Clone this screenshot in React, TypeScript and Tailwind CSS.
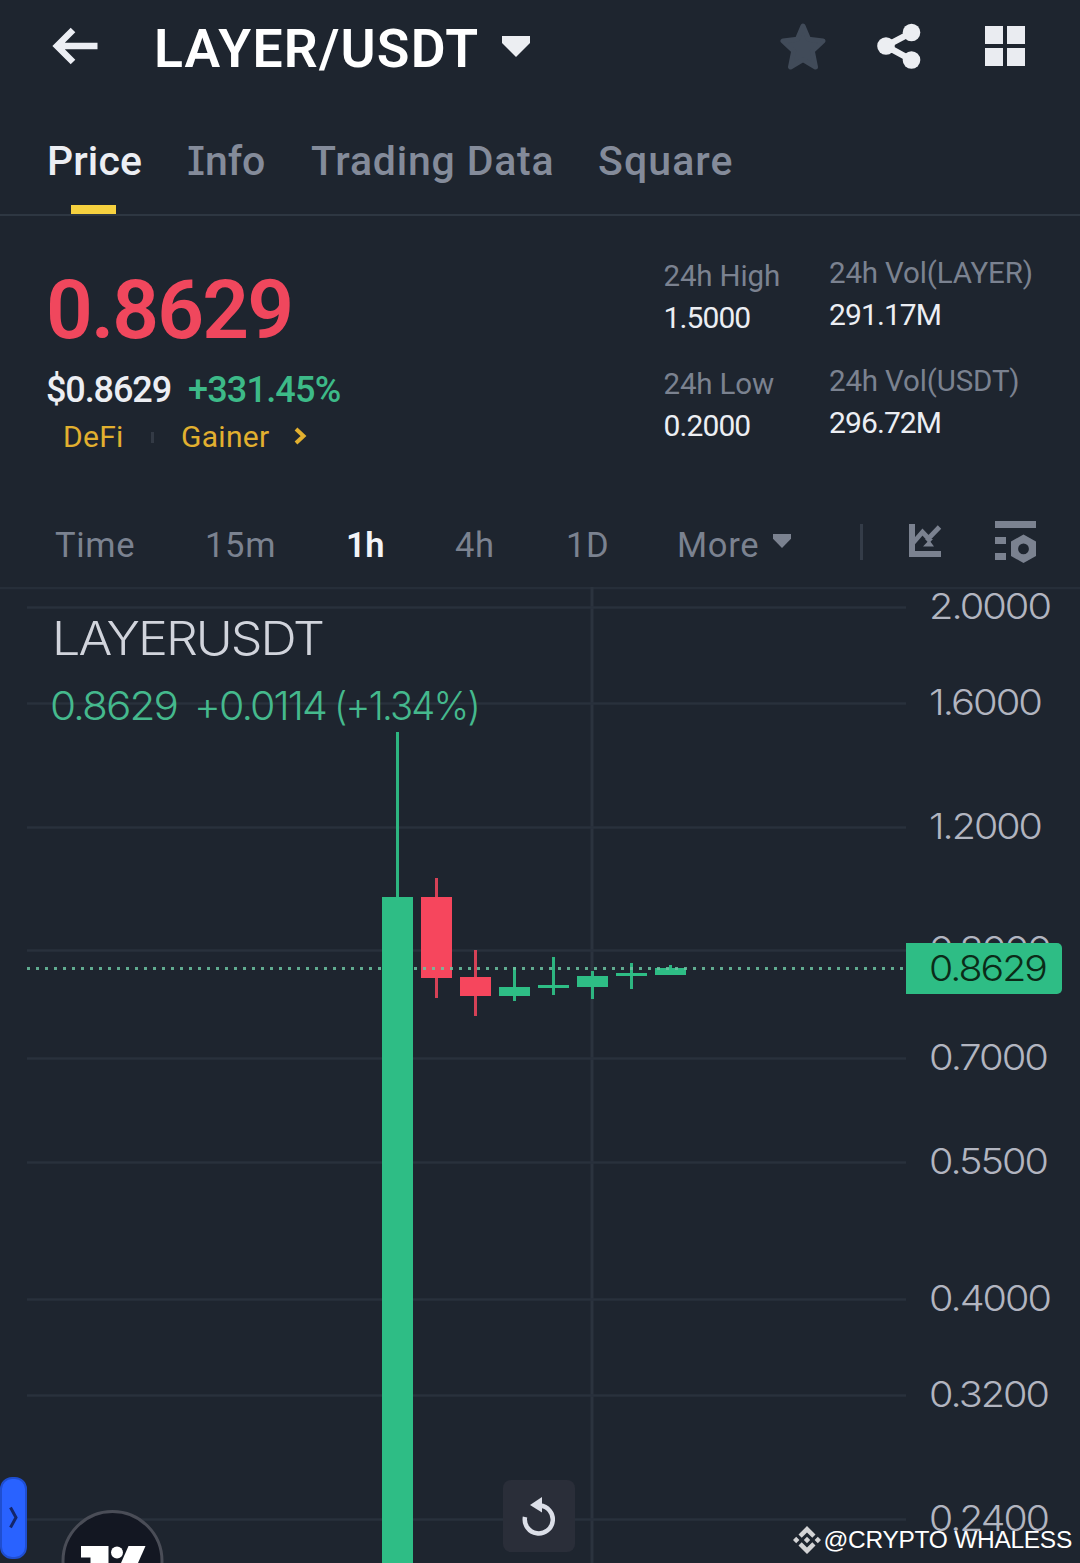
import { clsx } from 'clsx';

const tabs = [
  { label: 'Price', width: 'w-[140px]', tracking: 'tracking-[0.1px]' },
  { label: 'Info', width: 'w-[124px]', tracking: 'tracking-[-0.1px]' },
  { label: 'Trading Data', width: 'w-[287px]', tracking: 'tracking-[0.8px]' },
  { label: 'Square', width: 'w-[140px]', tracking: 'tracking-[1.1px]' },
];

const stats = [
  { label: '24h High', value: '1.5000' },
  { label: '24h Low', value: '0.2000' },
];

const volumes = [
  { label: '24h Vol(LAYER)', value: '291.17M' },
  { label: '24h Vol(USDT)', value: '296.72M' },
];

const intervals = [
  { label: 'Time', width: 'w-[150px]' },
  { label: '15m', width: 'w-[141px]' },
  { label: '1h', width: 'w-[109px]' },
  { label: '4h', width: 'w-[111px]' },
  { label: '1D', width: 'w-[111px]' },
];

// y positions are in chart space, 0 is the top edge of the chart pane
const levels = [
  { label: '2.0000', y: 20, width: 119 },
  { label: '1.6000', y: 116, width: 110 },
  { label: '1.2000', y: 240, width: 110 },
  { label: '0.8000', y: 363, width: 119 },
  { label: '0.7000', y: 471, width: 116 },
  { label: '0.5500', y: 575, width: 116 },
  { label: '0.4000', y: 712, width: 119 },
  { label: '0.3200', y: 808, width: 117 },
  { label: '0.2400', y: 932, width: 117 },
];

const candles = [
  { x: 382, high: 145, top: 310, bottom: 976, low: 976, up: true },
  { x: 421, high: 291, top: 310, bottom: 391, low: 411, up: false },
  { x: 460, high: 363, top: 390, bottom: 409, low: 429, up: false },
  { x: 499, high: 380, top: 400, bottom: 409, low: 414, up: true },
  { x: 538, high: 370, top: 398, bottom: 401, low: 408, up: true },
  { x: 577, high: 384, top: 389, bottom: 400, low: 412, up: true },
  { x: 616, high: 376, top: 386, bottom: 389, low: 402, up: true },
  { x: 655, high: 378, top: 381, bottom: 388, low: 388, up: true },
];

function Caret({ className }: { className: string }) {
  return (
    <svg viewBox="0 0 28 21" className={className} fill="currentColor" preserveAspectRatio="none">
      <path d="M0 0h28v7L14 21 0 7z" />
    </svg>
  );
}

function Header() {
  return (
    <header className="flex h-[96px] items-center">
      <svg viewBox="0 0 48 40" className="ml-[51px] h-10 w-12 -translate-y-[2px]" fill="none" stroke="#eceef4" strokeWidth="6.500">
        <path d="M46.500 20H6.500M22 4 6 20l16 16" />
      </svg>
      <h1 className="ml-[55px] w-[348px] translate-y-px whitespace-nowrap text-[53.500px] leading-[96px] font-semibold tracking-[1.200px] text-white">
        LAYER/USDT
      </h1>
      <Caret className="h-[21px] w-[28px] -translate-y-[2px] text-[#eceef2]" />
      <svg viewBox="0 0 48 50" className="ml-[249px] h-[50px] w-12 text-[#414b59]" fill="currentColor" stroke="currentColor" strokeWidth="5" strokeLinejoin="round">
        <path d="M24 3.500 29.600 16.800 44 18.500 33.300 28.500 36.500 44.500 24 37.200 11.500 44.500 14.700 28.500 4 18.500 18.400 16.800z" transform="translate(0 -.5)" />
      </svg>
      <svg viewBox="0 0 44 46" className="ml-[50px] h-[46px] w-11 -translate-y-[2px] text-[#eceef2]" fill="currentColor" stroke="currentColor">
        <path d="M34.500 9.500 9 23l25.500 14" fill="none" strokeWidth="6.500" />
        <circle cx="9" cy="23" r="8.800" stroke="none" />
        <circle cx="34.500" cy="9.500" r="8.800" stroke="none" />
        <circle cx="34.500" cy="37" r="8.800" stroke="none" />
      </svg>
      <div className="ml-[64px] grid -translate-y-[2px] grid-cols-2 gap-[4px]">
        {[0, 1, 2, 3].map((i) => (
          <span key={i} className="size-[18px] bg-[#eaecf1]" />
        ))}
      </div>
    </header>
  );
}

function Tabs() {
  return (
    <nav className="flex h-[120px] border-b-2 border-[#2e3742] pt-[35px] pl-[47px] text-[41px] leading-[60px] font-medium">
      {tabs.map((tab, i) => (
        <div key={tab.label} className={clsx('flex shrink-0 flex-col whitespace-nowrap', tab.width, tab.tracking, i === 0 ? 'text-[#eceef3]' : 'text-[#848b9a]')}>
          {tab.label === 'Info' ? (
            <span>
              {/* serifed capital I */}
              <span className="font-['Inter',sans-serif] text-[40px] leading-none [font-feature-settings:'cv08','ss02']">I</span>nfo
            </span>
          ) : (
            <span>{tab.label}</span>
          )}
          {i === 0 && <span className="mt-[14px] ml-[24px] h-[9px] w-[45px] bg-[#f6d13f]" />}
        </div>
      ))}
    </nav>
  );
}

function StatColumn({ items, className }: { items: typeof stats; className: string }) {
  return (
    <dl className={clsx('flex flex-col gap-[24px]', className)}>
      {items.map((item) => (
        <div key={item.label} className="whitespace-nowrap">
          <dt className="text-[29.500px] leading-[42px] tracking-[-0.150px] text-[#7b8290]">{item.label}</dt>
          <dd className="text-[30px] leading-[42px] font-[450] tracking-[-0.900px] text-[#eceef3]">{item.value}</dd>
        </div>
      ))}
    </dl>
  );
}

function Summary() {
  return (
    <section className="flex h-[286px]">
      <div className="w-[616px] pt-[54px] pl-[46px] whitespace-nowrap">
        <p className="text-[82px] leading-[80px] font-semibold tracking-[-1.900px] text-[#f0475d]">0.8629</p>
        <p className="mt-[20px] flex text-[36px] leading-[40px] font-medium">
          <span className="w-[142px] tracking-[-1.100px] text-[#eceef3]">$0.8629</span>
          <span className="tracking-[-0.800px] text-[#3dba88]">+331.45%</span>
        </p>
        <p className="mt-[7px] flex items-center pl-[17px] text-[30px] leading-[40px] tracking-[0.300px] text-[#e2b02f]">
          <span className="w-[88px]">DeFi</span>
          <span className="mr-[27px] h-[11px] w-[3px] bg-[#333a45]" />
          <span className="w-[113px]">Gainer</span>
          <svg viewBox="0 0 13 18" className="h-[18px] w-[13px] -translate-y-px" fill="none" stroke="currentColor" strokeWidth="4">
            <path d="M2 2l7.500 7L2 16" />
          </svg>
        </p>
      </div>
      <StatColumn items={stats} className="w-[166px] pt-[39px] pl-[47.5px]" />
      <StatColumn items={volumes} className="pt-[36px] pl-[47px]" />
    </section>
  );
}

function IntervalBar() {
  return (
    <div className="flex h-[85px] items-center pl-[55px] text-[34.500px] leading-[85px] tracking-[0.700px] text-[#7b8290]">
      {intervals.map((item) => (
        <span key={item.label} className={clsx('shrink-0 translate-y-px', item.width, item.label === '1h' && 'font-semibold tracking-[-0.5px] text-[#f3f4f8]')}>
          {item.label}
        </span>
      ))}
      <span className="w-[96px] shrink-0 translate-y-px">More</span>
      <Caret className="h-[14px] w-[18px] -translate-y-[4px]" />
      <span className="ml-[69px] h-[36px] w-[3px] -translate-y-[3px] bg-[#343c48]" />
      <svg viewBox="0 0 33 33" className="ml-[46px] h-[33px] w-[33px] -translate-y-[4px]" fill="currentColor">
        <path d="M0 0h6v27h26v6H0z" />
        <path d="M4 19l9.500-11 6 6.500L30.500 3" fill="none" stroke="currentColor" strokeWidth="4.800" />
        <path d="M16 15h8l-2.500 2.700L25 22.500H14l4.500-4.800z" />
      </svg>
      <svg viewBox="0 0 41 43" className="ml-[53px] h-[43px] w-[41px] -translate-y-[2px]" fill="currentColor">
        <path d="M0 0h41v7H0zM0 16h11v7H0zM0 32h11v7H0z" />
        <path fillRule="evenodd" d="M28.500 13.500 41 20.500v14.600L28.500 42 16 35.100V20.500zM28.500 22.500a5.400 5.400 0 1 0 0 10.800 5.400 5.400 0 0 0 0-10.800z" />
      </svg>
    </div>
  );
}

function Chart() {
  return (
    <svg viewBox="0 0 1080 976" className="h-[976px] w-[1080px] shrink-0 font-['Inter',sans-serif] font-light tracking-[-1.800px]">
      <path d="M0 1h1080" stroke="#262e39" strokeWidth="2.500" />
      <path d="M592 0v976" stroke="#2b333e" strokeWidth="3" />
      {levels.map((level) => (
        <g key={level.label}>
          <path d={`M27 ${level.y + 0.5}H906`} stroke="#29313c" strokeWidth="2.500" />
          <text x="929" y={level.y + 12} fontSize="36" textLength={level.width + 2} lengthAdjust="spacingAndGlyphs" fill="#b2b5c0">
            {level.label}
          </text>
        </g>
      ))}

      {candles.map((c) => (
        <g key={c.x} fill={c.up ? '#2ebd85' : '#f6465d'}>
          <rect x={c.x + 14} y={c.high} width="3" height={c.low - c.high} opacity={c.up ? 0.95 : 0.85} />
          <rect x={c.x} y={c.top} width="31" height={c.bottom - c.top} />
        </g>
      ))}
      <path d="M27 381.500H382M414 381.500H904" stroke="#6cc4a2" strokeWidth="3" strokeDasharray="3 6" opacity="0.850" />

      <text x="52" y="67.500" fontSize="46" textLength="271" lengthAdjust="spacingAndGlyphs" fill="#d1d4dc">LAYERUSDT</text>
      <g fontSize="39" fill="#45b98d">
        <text x="50" y="133" textLength="127" lengthAdjust="spacingAndGlyphs">0.8629</text>
        <text x="194" y="133" textLength="132" lengthAdjust="spacingAndGlyphs">+0.0114</text>
        <text x="334" y="133" textLength="145" lengthAdjust="spacingAndGlyphs">(+1.34%)</text>
      </g>

      <path d="M906 356h151a5 5 0 0 1 5 5v41a5 5 0 0 1-5 5H906z" fill="#2ebd85" />
      <text x="929" y="394" fontSize="36" textLength="117" lengthAdjust="spacingAndGlyphs" fill="#0b2b18">0.8629</text>

      {/* TradingView badge, cut off by the bottom edge */}
      <circle cx="112.500" cy="974" r="49.500" fill="#131722" stroke="#4a4d57" strokeWidth="3" />
      <g fill="#fff">
        <path d="M81 959h27.500v17H90.500v-5.500H81z" />
        <circle cx="117" cy="965.500" r="6" />
        <path d="M128.500 959h17l-7.500 17h-17z" />
      </g>

      <rect x="1" y="891" width="25" height="80" rx="11" fill="#2962ff" stroke="#1f4ed0" strokeWidth="2" />
      <path d="M10.500 920.500l5.500 10-5.500 10" fill="none" stroke="#14266b" strokeWidth="3" />

      <rect x="503" y="893" width="72" height="72" rx="8" fill="#2a2e39" />
      <path d="M525 930a14 14 0 1 0 15-11.500" fill="none" stroke="#dcdfe8" strokeWidth="4.500" />
      <path d="M530 918l12-8v15.500z" fill="#dcdfe8" />
    </svg>
  );
}

function Watermark() {
  return (
    <div className="absolute right-[8px] bottom-[9px] flex items-center font-['Liberation_Sans',sans-serif] text-[24.500px] leading-[28px] tracking-[-0.280px] whitespace-nowrap text-white">
      <svg viewBox="0 0 28 28" className="mr-[3px] size-[28px]" fill="#d3d3d5">
        <path d="M14 0l8.500 8.500-3.200 3.200L14 6.400l-5.300 5.300-3.200-3.200zM14 28l-8.500-8.500 3.200-3.200 5.300 5.300 5.300-5.300 3.200 3.200zM14 10.800l3.200 3.200-3.200 3.200-3.200-3.200zM3.200 10.800 6.400 14l-3.200 3.200L0 14zM24.800 10.800 28 14l-3.200 3.200-3.200-3.200z" />
      </svg>
      @CRYPTO WHALESS
    </div>
  );
}

export default function App() {
  return (
    <main className="relative flex h-[1563px] w-[1080px] flex-col overflow-hidden bg-[#1e252f] font-['Roboto',sans-serif]">
      <Header />
      <Tabs />
      <Summary />
      <IntervalBar />
      <Chart />
      <Watermark />
    </main>
  );
}
